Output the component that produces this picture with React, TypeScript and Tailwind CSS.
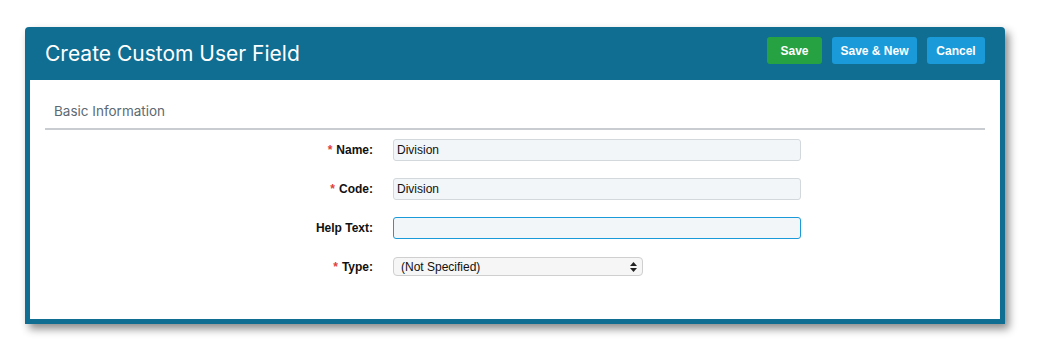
import React from 'react';

const Field = ({ label, required, children }: { label: string; required?: boolean; children: React.ReactNode }) => (
  <div className="flex items-center h-[39px]">
    <div className="w-[328px] text-right text-[12px] font-bold text-[#111]">
      {required && <span className="text-[#e0413a] mr-1">*</span>}
      {label}:
    </div>
    <div className="ml-5 flex items-center">{children}</div>
  </div>
);

const App = () => {
  return (
    <div className="min-h-screen bg-white pt-[27px] pl-[25px]" style={{ fontFamily: '"Liberation Sans", Arial, sans-serif' }}>
      <div className="w-[980px] bg-[#0f6e92] rounded-t-[4px] px-[5px] pb-[5px] shadow-[4px_5px_9px_rgba(0,0,0,0.45)]">
        <div className="h-[53px] flex items-start justify-between pl-[15px] pr-[15px]">
          <h1 className="mt-[13px] text-white text-[21px] leading-[28px] font-normal" style={{ fontFamily: 'Inter, "Open Sans", sans-serif' }}>
            Create Custom User Field
          </h1>
          <div className="mt-[10px] flex items-center gap-[10px]">
            <button className="h-[27px] w-[55px] rounded-[3px] bg-[#27a243] text-white text-[12px] font-bold">Save</button>
            <button className="h-[27px] w-[85px] rounded-[3px] bg-[#1b9ad9] text-white text-[12px] font-bold">Save &amp; New</button>
            <button className="h-[27px] w-[58px] rounded-[3px] bg-[#1b9ad9] text-white text-[12px] font-bold">Cancel</button>
          </div>
        </div>
        <div className="bg-white px-[15px] pb-[33px]">
          <div className="pt-[23px] pb-[8px] pl-[9px] border-b-2 border-[#c9cdd1] text-[13.5px] leading-[17px] text-[#5d6972]" style={{ fontFamily: 'Inter, "Open Sans", sans-serif' }}>
            Basic Information
          </div>
          <Field label="Name" required>
            <input
              readOnly
              value="Division"
              className="w-[408px] h-[22px] rounded-[3px] border border-[#d3d8dc] bg-[#f3f6f8] px-[3px] text-[12px] text-[#111] outline-none"
            />
          </Field>
          <Field label="Code" required>
            <input
              readOnly
              value="Division"
              className="w-[408px] h-[22px] rounded-[3px] border border-[#d3d8dc] bg-[#f3f6f8] px-[3px] text-[12px] text-[#111] outline-none"
            />
          </Field>
          <Field label="Help Text">
            <input
              readOnly
              value=""
              className="w-[408px] h-[22px] rounded-[3px] border border-[#1b9ad9] bg-[#f3f6f8] px-[3px] text-[12px] text-[#111] outline-none"
            />
          </Field>
          <Field label="Type" required>
            <div className="relative w-[250px] h-[19px] rounded-[4px] border border-[#cfcfcf] bg-[#f6f6f6] flex items-center pl-[7px] text-[12px] text-[#111]">
              (Not Specified)
              <svg className="absolute right-[5px] top-[4px]" width="7" height="10" viewBox="0 0 7 10">
                <path d="M3.5 0 L7 4 H0 Z" fill="#222" />
                <path d="M3.5 10 L7 6 H0 Z" fill="#222" />
              </svg>
            </div>
          </Field>
        </div>
      </div>
    </div>
  );
};

export default App;
